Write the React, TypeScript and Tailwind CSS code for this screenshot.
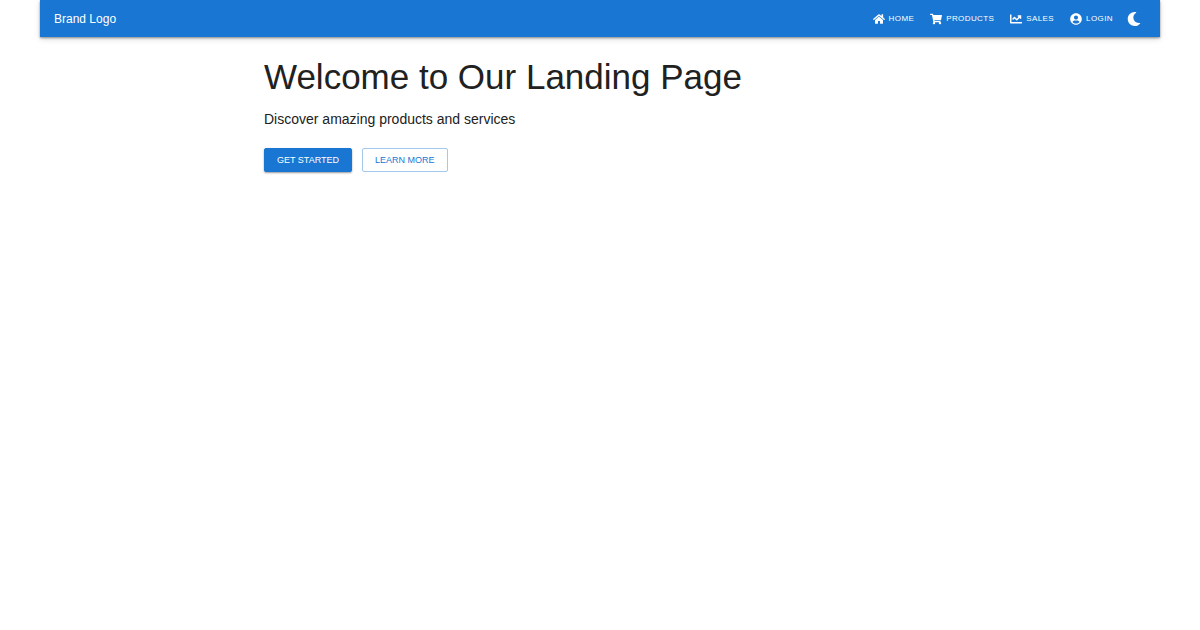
import React, { useState } from 'react';
import { FaHome, FaShoppingCart, FaChartLine, FaUserCircle, FaMoon, FaSun } from 'react-icons/fa';

const navItems = [
  { label: 'Home', href: '#home', icon: <FaHome size={12} /> },
  { label: 'Products', href: '#products', icon: <FaShoppingCart size={12} /> },
  { label: 'Sales', href: '#sales', icon: <FaChartLine size={12} /> },
  { label: 'Login', href: '#login', icon: <FaUserCircle size={12} /> },
];

const App: React.FC = () => {
  const [darkMode, setDarkMode] = useState(false);

  return (
    <div
      className={`min-h-screen px-10 font-['Liberation_Sans',Arial,sans-serif] ${darkMode ? 'bg-[#121212] text-white' : 'bg-white text-[#212121]'}`}
    >
      {/* App bar */}
      <header className="flex min-h-[37px] items-center justify-between bg-[#1976d2] pl-[14px] pr-[19px] text-white shadow-[0_1px_2px_rgba(0,0,0,0.4),0_2px_6px_rgba(0,0,0,0.15)]">
        <span className="text-[12px] leading-[18px]">Brand Logo</span>
        <div className="flex items-center gap-[14px]">
          <nav className="flex items-center gap-4">
            {navItems.map((item) => (
              <a
                key={item.label}
                href={item.href}
                className="flex items-center gap-1 text-[8px] leading-[14px] tracking-wider uppercase hover:opacity-80"
              >
                {item.icon}
                {item.label}
              </a>
            ))}
          </nav>
          <button
            type="button"
            aria-label="Toggle dark mode"
            onClick={() => setDarkMode(!darkMode)}
            className="cursor-pointer"
          >
            {darkMode ? <FaSun size={14} /> : <FaMoon size={14} />}
          </button>
        </div>
      </header>

      {/* Hero */}
      <main className="px-[20%] pt-5">
        <h1 className="text-[35px] leading-10">Welcome to Our Landing Page</h1>
        <p className="mt-[10px] text-[14px] leading-6">Discover amazing products and services</p>
        <div className="mt-[17px] flex gap-[10px]">
          <button
            type="button"
            className="cursor-pointer rounded-[2px] border border-[#1976d2] bg-[#1976d2] px-3 py-1 text-[9px] leading-[14px] text-white uppercase shadow-[0_1px_2px_rgba(0,0,0,0.4)] hover:bg-[#1565c0]"
          >
            Get Started
          </button>
          <button
            type="button"
            className="cursor-pointer rounded-[2px] border border-[#1976d2]/40 px-3 py-1 text-[9px] leading-[14px] text-[#1976d2] uppercase hover:border-[#1976d2]"
          >
            Learn More
          </button>
        </div>
      </main>
    </div>
  );
};

export default App;
